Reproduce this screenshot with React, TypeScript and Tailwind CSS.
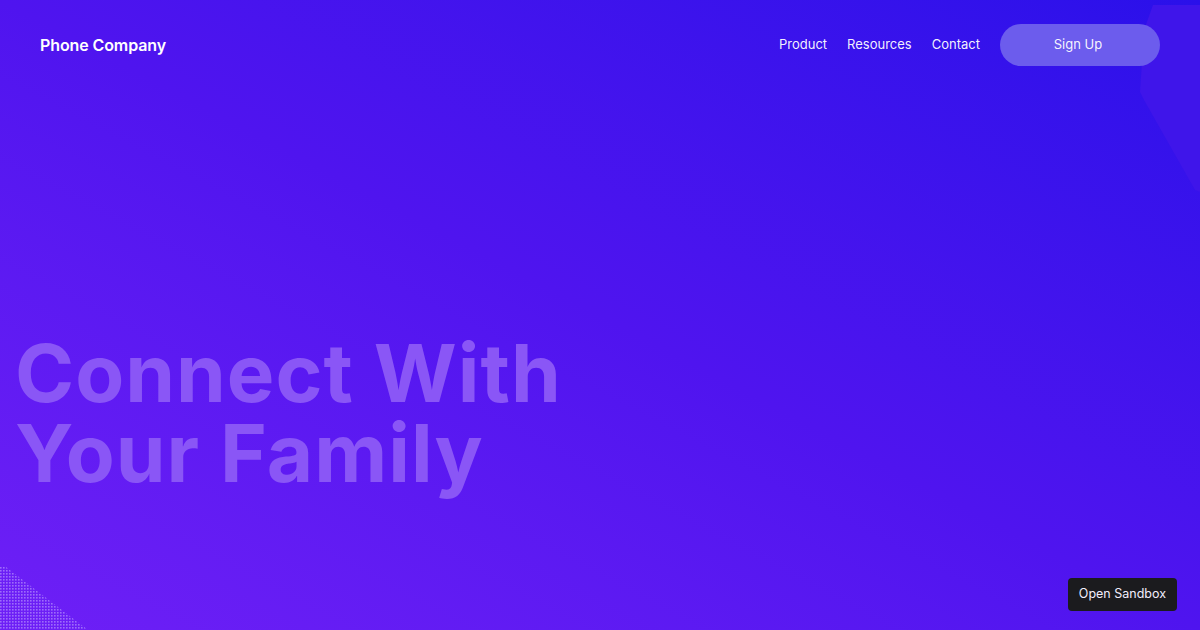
import { useState } from 'react';

function TopShape() {
  return (
    <svg className="absolute right-0 top-0 pointer-events-none" width="70" height="200" viewBox="0 0 70 200">
      <polygon points="23,5 70,5 70,192 65,190 14,100 10,92 14,30" fill="#3f15ea" />
    </svg>
  );
}

function DotCorner() {
  return (
    <svg className="absolute left-0 bottom-0 pointer-events-none" width="90" height="66" viewBox="0 0 90 66">
      <defs>
        <pattern id="dots" width="3" height="3" patternUnits="userSpaceOnUse">
          <rect x="0" y="0" width="1.6" height="1.6" fill="#a070fa" />
        </pattern>
      </defs>
      <polygon points="0,3 6,3 88,66 0,66" fill="url(#dots)" opacity="0.95" />
    </svg>
  );
}

export default function App() {
  const [links] = useState(['Product', 'Resources', 'Contact']);

  return (
    <div
      className="relative w-[1200px] h-[630px] overflow-hidden bg-gradient-to-tr from-[#6e1ff6] via-[#4f14ef] to-[#2a10ea] text-white"
      style={{ fontFamily: 'Inter, "Noto Sans", sans-serif' }}
    >
      <TopShape />
      <DotCorner />

      <header className="relative flex items-center justify-between pl-10 pr-10 pt-6">
        <div className="text-[16px] font-semibold tracking-[-0.1px]">Phone Company</div>
        <nav className="flex items-center">
          <ul className="flex items-center gap-5 mr-5">
            {links.map((l) => (
              <li key={l} className="text-[13px] text-white/95">
                {l}
              </li>
            ))}
          </ul>
          <button className="w-[160px] h-[42px] rounded-full bg-[#6c5ced] pr-1 text-[13px] text-white/95">
            Sign Up
          </button>
        </nav>
      </header>

      <main className="relative pl-[15px] pt-[267px]">
        <h1 className="text-[80px] font-bold leading-[80px] tracking-[1px] text-[#8a56f6]">
          <span className="block">Connect With</span>
          <span className="block">Your Family</span>
        </h1>
      </main>

      <button className="absolute right-[23px] bottom-[19px] h-[33px] px-[11px] rounded-[4px] bg-[#1b1b1e] text-[12.5px] text-[#f2eefc]">
        Open Sandbox
      </button>
    </div>
  );
}
